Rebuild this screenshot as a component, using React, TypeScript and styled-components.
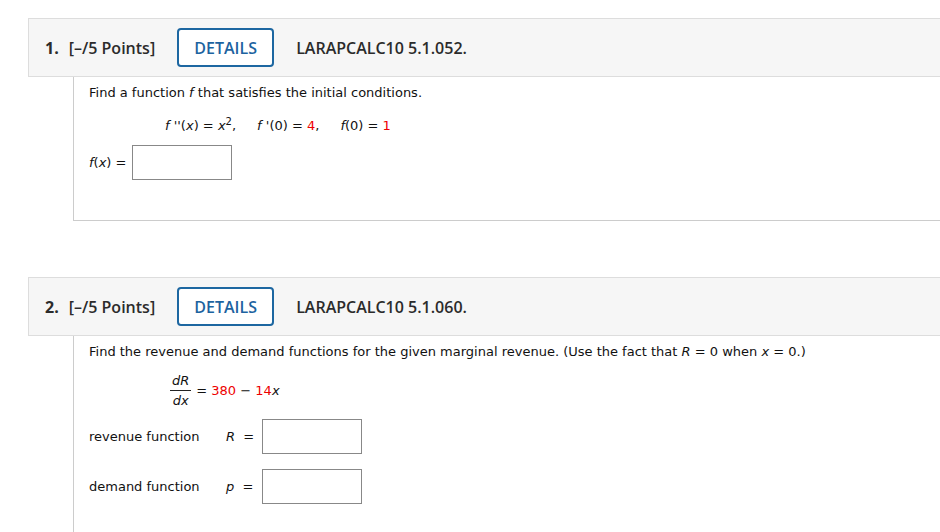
import React from 'react';
import styled, { createGlobalStyle } from 'styled-components';

const GlobalStyle = createGlobalStyle`
  html, body {
    margin: 0;
    padding: 0;
    background: #ffffff;
    overflow: hidden;
  }
`;

const Page = styled.div`
  width: 960px;
  padding: 18px 0 0 28px;
  box-sizing: border-box;
`;

const Question = styled.section`
  margin-bottom: 56px;
`;

const Header = styled.header`
  height: 59px;
  box-sizing: border-box;
  display: flex;
  align-items: center;
  padding-left: 16px;
  background: #f6f6f6;
  border: 1px solid #dddddd;
  border-right: none;
  font-family: 'Open Sans', 'Noto Sans', sans-serif;
  font-weight: 700;
  color: #2b2b2b;
`;

const Number = styled.span`
  font-size: 16px;
  margin-right: 10px;
`;

const Points = styled.span`
  font-size: 16px;
  font-weight: 600;
`;

const DetailsButton = styled.button`
  margin-left: 22px;
  width: 97px;
  height: 39px;
  box-sizing: border-box;
  border: 2px solid #1d67a1;
  border-radius: 4px;
  background: #ffffff;
  color: #1d63a0;
  font-family: 'Open Sans', 'Noto Sans', sans-serif;
  font-weight: 600;
  font-size: 16px;
  padding: 0;
`;

const Code = styled.span`
  margin-left: 22px;
  font-size: 16px;
  font-weight: 600;
`;

const Body = styled.div<{ $height: number; $closed?: boolean }>`
  margin-left: 45px;
  height: ${p => p.$height}px;
  box-sizing: border-box;
  border-left: 1px solid #cccccc;
  border-bottom: ${p => (p.$closed ? '1px solid #cccccc' : 'none')};
  padding: 8px 0 0 15px;
  font-family: 'DejaVu Sans', Verdana, sans-serif;
  font-size: 13px;
  color: #111111;
`;

const Prompt = styled.p`
  margin: 0;
  line-height: 16px;
`;

const Equation = styled.div<{ $indent: number; $top: number }>`
  margin: ${p => p.$top}px 0 0 ${p => p.$indent}px;
  display: flex;
  align-items: center;
  line-height: 16px;
  white-space: pre;
`;

const I = styled.i`
  font-style: italic;
`;

const Red = styled.span`
  color: #ee0000;
`;

const Sup = styled.sup`
  font-size: 10px;
  line-height: 0;
`;

const Gap = styled.span<{ $w: number }>`
  display: inline-block;
  width: ${p => p.$w}px;
`;

const Fraction = styled.span`
  display: inline-flex;
  flex-direction: column;
  align-items: center;
  margin-right: 5px;
`;

const Numer = styled.span`
  padding: 0 2px 2px;
  border-bottom: 1px solid #222222;
  line-height: 15px;
`;

const Denom = styled.span`
  padding-top: 2px;
  line-height: 15px;
`;

const AnswerRow = styled.div<{ $top: number }>`
  margin-top: ${p => p.$top}px;
  display: flex;
  align-items: center;
`;

const Label = styled.span<{ $w: number }>`
  width: ${p => p.$w}px;
  white-space: pre;
`;

const Box = styled.input`
  width: 100px;
  height: 35px;
  box-sizing: border-box;
  border: 1px solid #888888;
  background: #ffffff;
  margin: 0;
  padding: 0;
`;

function QuestionHeader({ n, code }: { n: number; code: string }) {
  return (
    <Header>
      <Number>{n}.</Number>
      <Points>[–/5 Points]</Points>
      <DetailsButton>DETAILS</DetailsButton>
      <Code>{code}</Code>
    </Header>
  );
}

export default function App() {
  return (
    <>
      <GlobalStyle />
      <Page>
        <Question>
          <QuestionHeader n={1} code="LARAPCALC10 5.1.052." />
          <Body $height={144} $closed>
            <Prompt>
              Find a function <I>f</I> that satisfies the initial conditions.
            </Prompt>
            <Equation $indent={76} $top={17}>
              <span>
                <I>f ''</I>(<I>x</I>) = <I>x</I>
                <Sup>2</Sup>,
              </span>
              <Gap $w={21} />
              <span>
                <I>f '</I>(0) = <Red>4</Red>,
              </span>
              <Gap $w={21} />
              <span>
                <I>f</I>(0) = <Red>1</Red>
              </span>
            </Equation>
            <AnswerRow $top={11}>
              <Label $w={43}>
                <I>f</I>(<I>x</I>) =
              </Label>
              <Box aria-label="f(x)" />
            </AnswerRow>
          </Body>
        </Question>
        <Question>
          <QuestionHeader n={2} code="LARAPCALC10 5.1.060." />
          <Body $height={200}>
            <Prompt>
              Find the revenue and demand functions for the given marginal revenue. (Use the fact that{' '}
              <I>R</I> = 0 when <I>x</I> = 0.)
            </Prompt>
            <Equation $indent={81} $top={13}>
              <Fraction>
                <Numer>
                  <I>dR</I>
                </Numer>
                <Denom>
                  <I>dx</I>
                </Denom>
              </Fraction>
              <span>
                = <Red>380</Red> − <Red>14</Red>
                <I>x</I>
              </span>
            </Equation>
            <AnswerRow $top={11}>
              <Label $w={137}>revenue function</Label>
              <Label $w={36}>
                <I>R</I>  =
              </Label>
              <Box aria-label="R" />
            </AnswerRow>
            <AnswerRow $top={15}>
              <Label $w={137}>demand function</Label>
              <Label $w={36}>
                <I>p</I>  =
              </Label>
              <Box aria-label="p" />
            </AnswerRow>
          </Body>
        </Question>
      </Page>
    </>
  );
}
